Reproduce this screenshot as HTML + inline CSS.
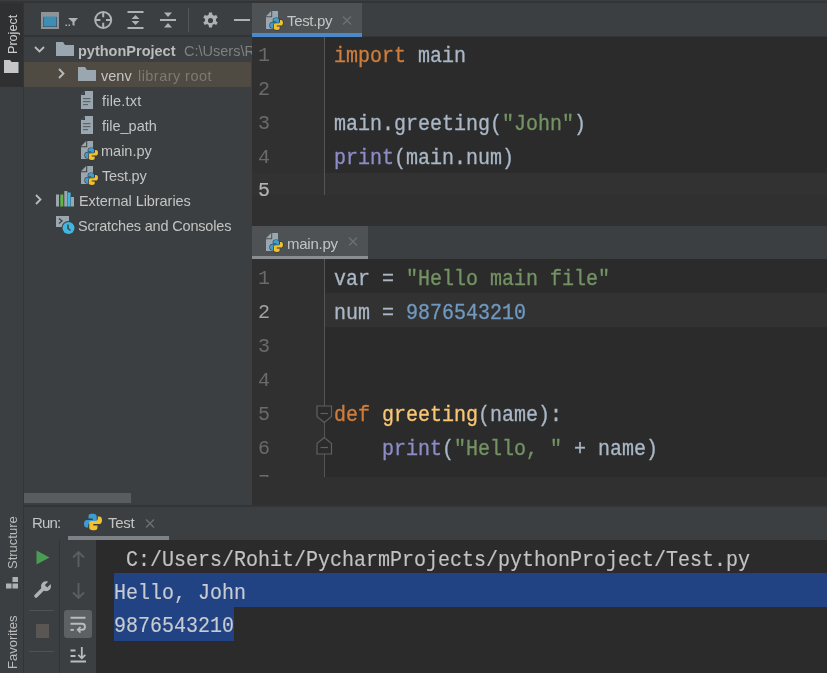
<!DOCTYPE html>
<html><head><meta charset="utf-8">
<style>
*{margin:0;padding:0;box-sizing:border-box}
html,body{width:827px;height:673px;overflow:hidden;background:#3C3F41}
body{-webkit-font-smoothing:antialiased;position:relative;font-family:"Liberation Sans",sans-serif;color:#BBBBBB}
.a{position:absolute}
.ui{position:absolute;font-family:"Liberation Sans",sans-serif;font-size:14.5px;white-space:nowrap;line-height:20px;color:#C4C4C4}
.m{position:absolute;font-family:"Liberation Mono",monospace;font-size:20px;white-space:pre;line-height:34px;color:#A9B7C6;-webkit-text-stroke:0.3px;transform:scaleY(1.08);transform-origin:0 22.3px}
.ln{position:absolute;font-family:"Liberation Mono",monospace;font-size:20px;white-space:pre;line-height:34px;color:#686A6C;width:20px;text-align:right;transform:scaleY(1.0);transform-origin:0 22.3px}
.kw{color:#CE7E3C}.st{color:#749363}.nu{color:#7099C0}.bi{color:#8C8CC8}.fn{color:#F9C673}
svg{position:absolute;overflow:visible}
</style></head><body><div id="w" style="position:absolute;left:0;top:0;width:827px;height:673px;will-change:transform">
<!-- top border -->
<div class="a" style="left:0;top:0;width:827px;height:3px;background:#323436"></div>
<div class="a" style="left:0;top:0;width:827px;height:1px;background:#3B3E40"></div>
<!-- left stripe -->
<div class="a" style="left:0;top:3px;width:24px;height:670px;background:#3C3F41"></div>
<div class="a" style="left:23px;top:3px;width:1px;height:670px;background:#323437"></div>
<div class="a" style="left:0;top:3px;width:23px;height:84px;background:#2E3032"></div>
<div class="a" style="left:5.5px;top:54px;transform:rotate(-90deg);transform-origin:0 0;font-size:12.6px;line-height:15px;color:#D0D0D0;white-space:nowrap">Project</div>
<svg style="left:4px;top:60px" width="15" height="13" viewBox="0 0 15 13"><path d="M0 0H6L7.5 2H14.5V13H0Z" fill="#C4C7C9"/></svg>
<div class="a" style="left:5px;top:569px;transform:rotate(-90deg);transform-origin:0 0;font-size:13px;line-height:15px;color:#BBBBBB;white-space:nowrap">Structure</div>
<svg style="left:5px;top:577px" width="14" height="12" viewBox="0 0 14 12"><rect x="7.5" y="0" width="5.5" height="5" fill="#AFB1B3"/><rect x="1" y="6.5" width="5.5" height="5" fill="#AFB1B3"/><rect x="7.5" y="6.5" width="5.5" height="5" fill="#AFB1B3"/></svg>
<div class="a" style="left:5px;top:669px;transform:rotate(-90deg);transform-origin:0 0;font-size:13px;line-height:15px;color:#BBBBBB;white-space:nowrap">Favorites</div>

<!-- project panel -->
<div class="a" style="left:24px;top:3px;width:228px;height:502px;background:#3C3F41"></div>
<div class="a" style="left:24px;top:35px;width:228px;height:2px;background:#323437"></div>
<!-- toolbar icons -->
<svg style="left:41px;top:12px" width="18" height="17" viewBox="0 0 18 17"><rect x="1" y="1" width="16" height="15" fill="none" stroke="#8F9396" stroke-width="2"/><rect x="1" y="1" width="16" height="4" fill="#8F9396"/><rect x="2.5" y="4.5" width="13" height="10" fill="#3D8DB5"/></svg>
<svg style="left:65px;top:17px" width="14" height="10" viewBox="0 0 14 10"><path d="M3 1H13L9.5 5V9L7.5 8V5Z" fill="#AFB1B3"/><rect x="0.5" y="7.5" width="1.5" height="1.5" fill="#AFB1B3"/><rect x="3.5" y="7.5" width="1.5" height="1.5" fill="#AFB1B3"/></svg>
<svg style="left:94px;top:11px" width="19" height="19" viewBox="0 0 19 19"><circle cx="9.2" cy="9" r="8" fill="none" stroke="#AFB1B3" stroke-width="2"/><path d="M9.2 1.5V6.2M9.2 11.8V16.5M1.7 9H6.4M12 9H16.7" stroke="#AFB1B3" stroke-width="2"/></svg>
<svg style="left:127px;top:10px" width="17" height="20" viewBox="0 0 17 20"><rect x="0.5" y="1" width="16" height="2" fill="#AFB1B3"/><rect x="0.5" y="17" width="16" height="2" fill="#AFB1B3"/><path d="M8.5 5L12.5 9H4.5Z M8.5 15L12.5 11H4.5Z" fill="#AFB1B3"/></svg>
<svg style="left:160px;top:12px" width="16" height="16" viewBox="0 0 16 16"><rect x="0" y="7" width="16" height="2" fill="#AFB1B3"/><path d="M4 0.5H12L8 5Z M4 15.5H12L8 11Z" fill="#AFB1B3"/></svg>
<div class="a" style="left:188px;top:8px;width:1px;height:24px;background:#515658"></div>
<svg style="left:202px;top:11.5px" width="17" height="17" viewBox="0 0 16 16"><path fill="#AFB1B3" fill-rule="evenodd" d="M6.6 0.5h2.8l0.4 2.2a5.6 5.6 0 0 1 1.5 0.9l2.1-0.8 1.4 2.4-1.7 1.4a5.6 5.6 0 0 1 0 1.8l1.7 1.4-1.4 2.4-2.1-0.8a5.6 5.6 0 0 1-1.5 0.9l-0.4 2.2H6.6l-0.4-2.2a5.6 5.6 0 0 1-1.5-0.9l-2.1 0.8-1.4-2.4 1.7-1.4a5.6 5.6 0 0 1 0-1.8L1.2 5.2l1.4-2.4 2.1 0.8a5.6 5.6 0 0 1 1.5-0.9z M8 5.6a2.4 2.4 0 1 0 0 4.8a2.4 2.4 0 1 0 0-4.8z"/></svg>
<div class="a" style="left:234px;top:19px;width:16px;height:2px;background:#AFB1B3"></div>

<!-- tree -->
<div class="a" style="left:24px;top:62px;width:227px;height:25px;background:#4F4B42"></div>
<svg style="left:34px;top:46px" width="11" height="7" viewBox="0 0 11 7"><path d="M1 1L5.5 5.5L10 1" fill="none" stroke="#B9BBBD" stroke-width="1.8"/></svg>
<svg style="left:56px;top:42px" width="18" height="14" viewBox="0 0 18 14"><path d="M0 0H7L9 3H18V14H0Z" fill="#9AA7B0"/></svg>
<div class="ui" style="left:78px;top:41px;font-weight:bold;color:#BBBBBB">pythonProject</div>
<div class="ui" style="left:184px;top:41px;color:#808080">C:\Users\Rohit\PycharmProjects</div>
<svg style="left:58px;top:68px" width="7" height="11" viewBox="0 0 7 11"><path d="M1 1L5.5 5.5L1 10" fill="none" stroke="#B9BBBD" stroke-width="1.8"/></svg>
<svg style="left:78px;top:67px" width="18" height="14" viewBox="0 0 18 14"><path d="M0 0H7L9 3H18V14H0Z" fill="#9AA7B0"/></svg>
<div class="ui" style="left:101px;top:66px">venv</div>
<div class="ui" style="left:138px;top:66px;color:#7C7A74;letter-spacing:0.45px">library root</div>

<svg style="left:81px;top:91px" width="12" height="18" viewBox="0 0 12 18"><path d="M4 0H12V18H0V4Z" fill="#9AA7B0"/><path d="M0 4H4V0Z" fill="#3C3F41"/><rect x="2" y="7" width="7.5" height="1.2" fill="#5E6366"/><rect x="2" y="10" width="7.5" height="1.2" fill="#5E6366"/><rect x="2" y="13" width="5" height="1.2" fill="#5E6366"/></svg>
<div class="ui" style="left:102px;top:91px;letter-spacing:0.2px">file.txt</div>
<svg style="left:81px;top:116px" width="12" height="18" viewBox="0 0 12 18"><path d="M4 0H12V18H0V4Z" fill="#9AA7B0"/><path d="M0 4H4V0Z" fill="#3C3F41"/><rect x="2" y="7" width="7.5" height="1.2" fill="#5E6366"/><rect x="2" y="10" width="7.5" height="1.2" fill="#5E6366"/><rect x="2" y="13" width="5" height="1.2" fill="#5E6366"/></svg>
<div class="ui" style="left:102px;top:116px">file_path</div>
<!-- python file icons -->
<svg style="left:81px;top:141px" width="17" height="19" viewBox="0 0 17 19"><path d="M0 5.2L5.2 0V5.2Z" fill="#9AA7B0"/><path d="M6.2 0H12V18H0V6.2H6.2Z" fill="#9AA7B0"/><g transform="translate(4,6.5)" stroke="#33363A" stroke-width="1.2" paint-order="stroke"><path d="M6 0.5C3.5 0.5 3.3 1.5 3.3 2.5V4H6.3V5H2C1 5 0 5.8 0 7.8C0 9.8 0.9 10.5 2 10.5H3V9C3 8 3.8 7.2 4.8 7.2H7.7C8.5 7.2 9.2 6.5 9.2 5.7V2.5C9.2 1.5 8.5 0.5 6 0.5Z" fill="#3C9DD0"/><path d="M7 12.5C9.5 12.5 9.7 11.5 9.7 10.5V9H6.7V8H11C12 8 13 7.2 13 5.2C13 3.2 12.1 2.5 11 2.5H10V4C10 5 9.2 5.8 8.2 5.8H5.3C4.5 5.8 3.8 6.5 3.8 7.3V10.5C3.8 11.5 4.5 12.5 7 12.5Z" fill="#F2C12E"/></g></svg>
<div class="ui" style="left:101px;top:141px">main.py</div>
<svg style="left:81px;top:166px" width="17" height="19" viewBox="0 0 17 19"><path d="M0 5.2L5.2 0V5.2Z" fill="#9AA7B0"/><path d="M6.2 0H12V18H0V6.2H6.2Z" fill="#9AA7B0"/><g transform="translate(4,6.5)" stroke="#33363A" stroke-width="1.2" paint-order="stroke"><path d="M6 0.5C3.5 0.5 3.3 1.5 3.3 2.5V4H6.3V5H2C1 5 0 5.8 0 7.8C0 9.8 0.9 10.5 2 10.5H3V9C3 8 3.8 7.2 4.8 7.2H7.7C8.5 7.2 9.2 6.5 9.2 5.7V2.5C9.2 1.5 8.5 0.5 6 0.5Z" fill="#3C9DD0"/><path d="M7 12.5C9.5 12.5 9.7 11.5 9.7 10.5V9H6.7V8H11C12 8 13 7.2 13 5.2C13 3.2 12.1 2.5 11 2.5H10V4C10 5 9.2 5.8 8.2 5.8H5.3C4.5 5.8 3.8 6.5 3.8 7.3V10.5C3.8 11.5 4.5 12.5 7 12.5Z" fill="#F2C12E"/></g></svg>
<div class="ui" style="left:102px;top:166px;letter-spacing:-0.2px">Test.py</div>

<svg style="left:35px;top:194px" width="7" height="11" viewBox="0 0 7 11"><path d="M1 1L5.5 5.5L1 10" fill="none" stroke="#B9BBBD" stroke-width="1.8"/></svg>
<svg style="left:56px;top:191px" width="18" height="16" viewBox="0 0 18 16"><rect x="0" y="3.5" width="3" height="12" fill="#9AA7B0"/><rect x="4.3" y="3.5" width="3" height="12" fill="#62B543"/><rect x="8.3" y="0" width="3" height="15.5" fill="#9AA7B0"/><rect x="11.6" y="1.5" width="3" height="14" fill="#40B6E0"/><rect x="15" y="6" width="3" height="9.5" fill="#9AA7B0"/></svg>
<div class="ui" style="left:79px;top:191px;letter-spacing:-0.06px">External Libraries</div>
<svg style="left:56px;top:216px" width="20" height="20" viewBox="0 0 20 20"><rect x="0" y="0" width="13" height="11" fill="#9AA7B0"/><path d="M3 2.5L6 5L3 7.5" fill="none" stroke="#3C3F41" stroke-width="1.3"/><circle cx="12.5" cy="12" r="7" fill="#3C3F41"/><circle cx="12.5" cy="12" r="6" fill="#40B6E0"/><path d="M12 8.5V12.5L14.5 14.5" fill="none" stroke="#3C3F41" stroke-width="1.4"/></svg>
<div class="ui" style="left:78px;top:216px;letter-spacing:-0.18px">Scratches and Consoles</div>

<div class="a" style="left:24px;top:493px;width:107px;height:10px;background:#5A5D5F"></div>

<!-- editor 1 -->
<div class="a" style="left:252px;top:3px;width:575px;height:34px;background:#3C3F41"></div>
<div class="a" style="left:252px;top:3px;width:110px;height:34px;background:#4E5254"></div>
<div class="a" style="left:252px;top:32.5px;width:110px;height:4.5px;background:#4A8ACB"></div>
<svg style="left:265px;top:11px" width="19" height="19" viewBox="0 0 17 19"><path d="M0 5.2L5.2 0V5.2Z" fill="#9AA7B0"/><path d="M6.2 0H12V18H0V6.2H6.2Z" fill="#9AA7B0"/><g transform="translate(4,6.5)" stroke="#33363A" stroke-width="1.2" paint-order="stroke"><path d="M6 0.5C3.5 0.5 3.3 1.5 3.3 2.5V4H6.3V5H2C1 5 0 5.8 0 7.8C0 9.8 0.9 10.5 2 10.5H3V9C3 8 3.8 7.2 4.8 7.2H7.7C8.5 7.2 9.2 6.5 9.2 5.7V2.5C9.2 1.5 8.5 0.5 6 0.5Z" fill="#3C9DD0"/><path d="M7 12.5C9.5 12.5 9.7 11.5 9.7 10.5V9H6.7V8H11C12 8 13 7.2 13 5.2C13 3.2 12.1 2.5 11 2.5H10V4C10 5 9.2 5.8 8.2 5.8H5.3C4.5 5.8 3.8 6.5 3.8 7.3V10.5C3.8 11.5 4.5 12.5 7 12.5Z" fill="#F2C12E"/></g></svg>
<div class="ui" style="left:287px;top:11px;font-size:15px;letter-spacing:-0.33px">Test.py</div>
<svg style="left:342px;top:16px" width="10" height="9" viewBox="0 0 10 9"><path d="M1 0.5L9 8.5M9 0.5L1 8.5" stroke="#6E7173" stroke-width="1.3"/></svg>

<div class="a" style="left:362px;top:36px;width:465px;height:1px;background:#333537"></div>
<div class="a" style="left:252px;top:37px;width:575px;height:158px;background:#2B2B2B"></div>
<div class="a" style="left:252px;top:37px;width:72px;height:158px;background:#303030"></div>
<div class="a" style="left:252px;top:173px;width:575px;height:22px;background:#323232"></div>
<div class="a" style="left:324px;top:37px;width:1px;height:158px;background:#555555"></div>
<div class="a" style="left:252px;top:195px;width:575px;height:31px;background:#303030"></div>

<div style="position:absolute;left:0;top:0;width:827px;height:195px;overflow:hidden">
<div class="ln" style="left:250px;top:38.5px">1</div>
<div class="ln" style="left:250px;top:72.5px">2</div>
<div class="ln" style="left:250px;top:106.5px">3</div>
<div class="ln" style="left:250px;top:140.5px">4</div>
<div class="m" style="left:334px;top:40px"><span class="kw">import</span> main</div>
<div class="m" style="left:334px;top:108px">main.greeting(<span class="st">"John"</span>)</div>
<div class="m" style="left:334px;top:142px"><span class="bi">print</span>(main.num)</div>
</div>

<div class="ln" style="left:250px;top:173.5px;color:#B4B4B4;-webkit-text-stroke:0.15px">5</div>
<!-- editor 2 -->
<div class="a" style="left:252px;top:226px;width:575px;height:33px;background:#3C3F41"></div>
<div class="a" style="left:252px;top:226px;width:116px;height:33px;background:#4E5254"></div>
<div class="a" style="left:252px;top:256px;width:116px;height:3px;background:#8A8E91"></div>
<svg style="left:265px;top:233px" width="19" height="19" viewBox="0 0 17 19"><path d="M0 5.2L5.2 0V5.2Z" fill="#9AA7B0"/><path d="M6.2 0H12V18H0V6.2H6.2Z" fill="#9AA7B0"/><g transform="translate(4,6.5)" stroke="#33363A" stroke-width="1.2" paint-order="stroke"><path d="M6 0.5C3.5 0.5 3.3 1.5 3.3 2.5V4H6.3V5H2C1 5 0 5.8 0 7.8C0 9.8 0.9 10.5 2 10.5H3V9C3 8 3.8 7.2 4.8 7.2H7.7C8.5 7.2 9.2 6.5 9.2 5.7V2.5C9.2 1.5 8.5 0.5 6 0.5Z" fill="#3C9DD0"/><path d="M7 12.5C9.5 12.5 9.7 11.5 9.7 10.5V9H6.7V8H11C12 8 13 7.2 13 5.2C13 3.2 12.1 2.5 11 2.5H10V4C10 5 9.2 5.8 8.2 5.8H5.3C4.5 5.8 3.8 6.5 3.8 7.3V10.5C3.8 11.5 4.5 12.5 7 12.5Z" fill="#F2C12E"/></g></svg>
<div class="ui" style="left:287px;top:234px;font-size:15px;letter-spacing:-0.25px">main.py</div>
<svg style="left:348px;top:237px" width="10" height="9" viewBox="0 0 10 9"><path d="M1 0.5L9 8.5M9 0.5L1 8.5" stroke="#6E7173" stroke-width="1.3"/></svg>

<div class="a" style="left:252px;top:259px;width:575px;height:218px;background:#2B2B2B"></div>
<div class="a" style="left:252px;top:259px;width:72px;height:218px;background:#303030"></div>
<div class="a" style="left:325px;top:293px;width:502px;height:34px;background:#323232"></div>
<div class="a" style="left:324px;top:259px;width:1px;height:218px;background:#555555"></div>
<div class="a" style="left:252px;top:477px;width:575px;height:28px;background:#303030"></div>

<div style="position:absolute;left:0;top:0;width:827px;height:477px;overflow:hidden">
<div class="ln" style="left:250px;top:261.5px">1</div>
<div class="ln" style="left:250px;top:295.5px;color:#A4A3A3">2</div>
<div class="ln" style="left:250px;top:329.5px">3</div>
<div class="ln" style="left:250px;top:363.5px">4</div>
<div class="ln" style="left:250px;top:397.5px">5</div>
<div class="ln" style="left:250px;top:431.5px">6</div>
<div class="ln" style="left:250px;top:465.5px">7</div>
<div class="m" style="left:334px;top:263px">var = <span class="st">"Hello main file"</span></div>
<div class="m" style="left:334px;top:297px">num = <span class="nu">9876543210</span></div>
<div class="m" style="left:334px;top:399px"><span class="kw">def</span> <span class="fn">greeting</span>(name):</div>
<div class="m" style="left:334px;top:433px">    <span class="bi">print</span>(<span class="st">"Hello, "</span> + name)</div>
</div>
<svg style="left:316px;top:405px" width="17" height="19" viewBox="0 0 17 19"><path d="M1 1H15.5V11.5L8.25 17.5L1 11.5Z" fill="#2B2B2B" stroke="#5E6163" stroke-width="1.2"/><path d="M4.5 8.5H12" stroke="#5E6163" stroke-width="1.2"/></svg>
<svg style="left:316px;top:436px" width="17" height="19" viewBox="0 0 17 19"><path d="M1 18H15.5V7.5L8.25 1.5L1 7.5Z" fill="#2B2B2B" stroke="#5E6163" stroke-width="1.2"/><path d="M4.5 11.5H12" stroke="#5E6163" stroke-width="1.2"/></svg>

<!-- run panel -->
<div class="a" style="left:24px;top:505px;width:803px;height:2px;background:#323437"></div>
<div class="a" style="left:24px;top:507px;width:803px;height:33px;background:#3C3F41"></div>
<div class="ui" style="left:32px;top:513px;font-size:15px;letter-spacing:-0.8px">Run:</div>
<svg style="left:84px;top:513px" width="18" height="18" viewBox="0 0 13 13"><path d="M6 0.5C3.5 0.5 3.3 1.5 3.3 2.5V4H6.3V5H2C1 5 0 5.8 0 7.8C0 9.8 0.9 10.5 2 10.5H3V9C3 8 3.8 7.2 4.8 7.2H7.7C8.5 7.2 9.2 6.5 9.2 5.7V2.5C9.2 1.5 8.5 0.5 6 0.5Z" fill="#3C9DD0"/><path d="M7 12.5C9.5 12.5 9.7 11.5 9.7 10.5V9H6.7V8H11C12 8 13 7.2 13 5.2C13 3.2 12.1 2.5 11 2.5H10V4C10 5 9.2 5.8 8.2 5.8H5.3C4.5 5.8 3.8 6.5 3.8 7.3V10.5C3.8 11.5 4.5 12.5 7 12.5Z" fill="#F2C12E"/></svg>
<div class="ui" style="left:108px;top:513px;font-size:15px;letter-spacing:-0.3px">Test</div>
<svg style="left:145px;top:519px" width="10" height="9" viewBox="0 0 10 9"><path d="M1 0.5L9 8.5M9 0.5L1 8.5" stroke="#6E7173" stroke-width="1.3"/></svg>
<div class="a" style="left:68px;top:536px;width:101px;height:3.5px;background:#7D8286"></div>

<div class="a" style="left:24px;top:540px;width:803px;height:133px;background:#3C3F41"></div>
<div class="a" style="left:59px;top:540px;width:1px;height:133px;background:#323437"></div>
<div class="a" style="left:96px;top:540px;width:731px;height:133px;background:#2B2B2B"></div>
<svg style="left:36px;top:550px" width="14" height="15" viewBox="0 0 14 15"><path d="M0.5 0.5L13.5 7.5L0.5 14.5Z" fill="#499C54"/></svg>
<svg style="left:33px;top:580px" width="19" height="19" viewBox="0 0 19 19"><path d="M11.5 7.5L3 16" stroke="#AFB1B3" stroke-width="3.6" stroke-linecap="round"/><circle cx="13" cy="6.2" r="5" fill="#AFB1B3"/><path d="M13 6.2L18.5 0.7" stroke="#3C3F41" stroke-width="3.4"/></svg>
<div class="a" style="left:29px;top:610px;width:25px;height:1px;background:#4E5254"></div>
<div class="a" style="left:35.5px;top:624px;width:13px;height:13.5px;background:#5A5654"></div>
<div class="a" style="left:29px;top:651px;width:25px;height:1px;background:#4E5254"></div>
<svg style="left:72px;top:551px" width="13" height="16" viewBox="0 0 13 16"><path d="M6.5 1V16M1 6.5L6.5 1L12 6.5" fill="none" stroke="#5C5F62" stroke-width="1.9"/></svg>
<svg style="left:72px;top:583px" width="13" height="16" viewBox="0 0 13 16"><path d="M6.5 0V15M1 9.5L6.5 15L12 9.5" fill="none" stroke="#5C5F62" stroke-width="1.9"/></svg>
<div class="a" style="left:64px;top:610px;width:28px;height:28px;background:#5C6164;border-radius:3px"></div>
<svg style="left:69px;top:616px" width="18" height="18" viewBox="0 0 18 18"><path d="M1.5 1.7H16.5M1.5 7.7H13A3 3 0 0 1 13 13.7H9.5" fill="none" stroke="#B9BBBD" stroke-width="1.9"/><path d="M11.5 10.8L8.7 13.7L11.5 16.6" fill="none" stroke="#B9BBBD" stroke-width="1.7"/><path d="M1.5 13.9H4.8" stroke="#B9BBBD" stroke-width="1.9"/></svg>
<svg style="left:70px;top:647px" width="17" height="16" viewBox="0 0 17 16"><path d="M0.5 3.5H5.5M0.5 9H5.5M0.5 14.5H16M11.8 0V11.5M8.3 7.8L11.8 11.3L15.3 7.8" fill="none" stroke="#B9BBBD" stroke-width="1.8"/></svg>

<!-- console -->
<div class="a" style="left:114px;top:573px;width:713px;height:34px;background:#214283"></div>
<div class="a" style="left:114px;top:607px;width:120px;height:34px;background:#214283"></div>
<div class="m" style="left:114px;top:544px;color:#C2C2C2;-webkit-text-stroke:0.15px"> C:/Users/Rohit/PycharmProjects/pythonProject/Test.py</div>
<div class="m" style="left:114px;top:577px;color:#C8CBD0;-webkit-text-stroke:0.15px">Hello, John</div>
<div class="m" style="left:114px;top:610px;color:#C8CBD0;-webkit-text-stroke:0.15px">9876543210</div>
</div></body></html>
